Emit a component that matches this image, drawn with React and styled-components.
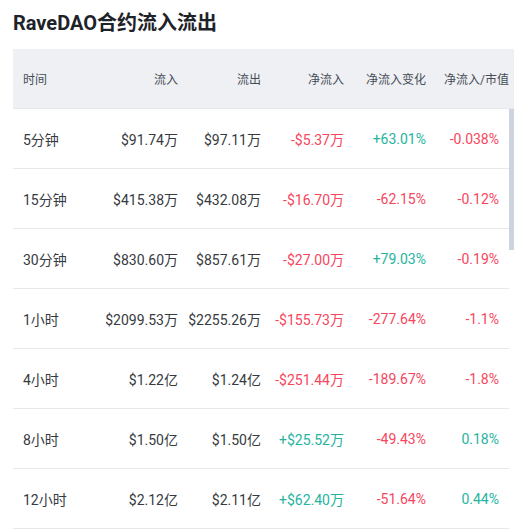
import React from 'react';
import styled, { createGlobalStyle } from 'styled-components';

const GlobalStyle = createGlobalStyle`
  body {
    margin: 0;
    background: #ffffff;
    font-family: Roboto, "Noto Sans CJK SC", sans-serif;
  }
`;

const Page = styled.div`
  padding: 9px 8px 0 13px;
`;

const Title = styled.h2`
  margin: 0 0 12px;
  font-size: 20px;
  line-height: 28px;
  font-weight: 700;
  color: #1e2329;
`;

const cols = '92px 83px 83px 83px 82px';

const HeaderRow = styled.div`
  display: grid;
  grid-template-columns: ${cols} 78px;
  height: 59px;
  align-items: center;
  background: #eef0f3;
  border-bottom: 1px solid #e6e8ea;
  font-size: 12px;
  color: #474d57;
`;

const Body = styled.div`
  display: flex;
`;

const Rows = styled.div`
  width: 496px;
`;

const Row = styled.div`
  display: grid;
  grid-template-columns: ${cols} 73px;
  height: 59px;
  align-items: center;
  border-bottom: 1px solid #e6e8ea;
  font-size: 14px;
  color: #363a41;
`;

const Cell = styled.div`
  display: flex;
  justify-content: ${({ $left }) => ($left ? 'flex-start' : 'flex-end')};
  padding: 0 ${({ $edge }) => ($edge ? '5px' : '10px')} 0 10px;
  white-space: nowrap;
  min-width: 0;
  color: ${({ $tone }) =>
    $tone === 'up' ? '#25b4a0' : $tone === 'down' ? '#f6465d' : 'inherit'};
`;

const Track = styled.div`
  width: 5px;
`;

const Thumb = styled.div`
  height: 141px;
  background: #cdd3df;
`;

const data = [
  ['5分钟', '$91.74万', '$97.11万', '-$5.37万', '+63.01%', '-0.038%'],
  ['15分钟', '$415.38万', '$432.08万', '-$16.70万', '-62.15%', '-0.12%'],
  ['30分钟', '$830.60万', '$857.61万', '-$27.00万', '+79.03%', '-0.19%'],
  ['1小时', '$2099.53万', '$2255.26万', '-$155.73万', '-277.64%', '-1.1%'],
  ['4小时', '$1.22亿', '$1.24亿', '-$251.44万', '-189.67%', '-1.8%'],
  ['8小时', '$1.50亿', '$1.50亿', '+$25.52万', '-49.43%', '0.18%'],
  ['12小时', '$2.12亿', '$2.11亿', '+$62.40万', '-51.64%', '0.44%'],
];

const tone = (v) => (v.startsWith('-') ? 'down' : 'up');

export default function App() {
  return (
    <Page>
      <GlobalStyle />
      <Title>RaveDAO合约流入流出</Title>
      <HeaderRow>
        <Cell $left>时间</Cell>
        <Cell>流入</Cell>
        <Cell>流出</Cell>
        <Cell>净流入</Cell>
        <Cell>净流入变化</Cell>
        <Cell $edge>净流入/市值</Cell>
      </HeaderRow>
      <Body>
        <Rows>
          {data.map((r) => (
            <Row key={r[0]}>
              <Cell $left>{r[0]}</Cell>
              <Cell>{r[1]}</Cell>
              <Cell>{r[2]}</Cell>
              <Cell $tone={tone(r[3])}>{r[3]}</Cell>
              <Cell $tone={tone(r[4])}>{r[4]}</Cell>
              <Cell $tone={tone(r[5])}>{r[5]}</Cell>
            </Row>
          ))}
        </Rows>
        <Track>
          <Thumb />
        </Track>
      </Body>
    </Page>
  );
}
